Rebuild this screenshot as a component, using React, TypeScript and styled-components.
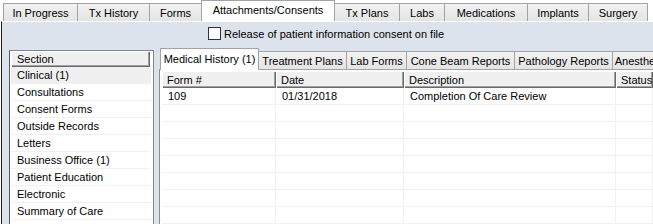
import React from "react";
import styled, { createGlobalStyle } from "styled-components";

const Global = createGlobalStyle`
  html, body { margin: 0; padding: 0; background: #ffffff; }
  body { font-family: "Liberation Sans", Arial, sans-serif; font-size: 11px; color: #000; }
`;

const Root = styled.div`
  width: 653px;
  height: 224px;
  overflow: hidden;
  display: flex;
  flex-direction: column;
  background: #ffffff;
`;

const TopStrip = styled.div`
  display: flex;
  align-items: flex-end;
  height: 21px;
  padding-left: 3px;
  flex: none;
`;

const TopTab = styled.div<{ $w: number; $active?: boolean }>`
  box-sizing: border-box;
  width: ${(p) => p.$w}px;
  height: ${(p) => (p.$active ? 21 : 18)}px;
  margin-left: -1px;
  display: flex;
  align-items: center;
  justify-content: center;
  border: 1px solid #a3a3a3;
  border-bottom: none;
  background: ${(p) => (p.$active ? "#ffffff" : "linear-gradient(#f2f2f2, #e4e4e4)")};
  position: relative;
  z-index: ${(p) => (p.$active ? 2 : 1)};
  padding-bottom: ${(p) => (p.$active ? 3 : 0)}px;
  white-space: nowrap;
  &:first-child { margin-left: 0; }
`;

const Panel = styled.div`
  flex: 1;
  margin-left: 1px;
  border-left: 1px solid #1e1e1e;
  border-top: 1px solid #ffffff;
  background: #dde3ec;
  display: flex;
  flex-direction: column;
  padding-top: 5px;
`;

const ConsentRow = styled.label`
  display: flex;
  align-items: center;
  gap: 3px;
  padding-left: 206px;
  height: 13px;
`;

const CheckBox = styled.span`
  box-sizing: border-box;
  width: 13px;
  height: 13px;
  border: 1px solid #333333;
  background: #ffffff;
  flex: none;
`;

const Body = styled.div`
  display: flex;
  align-items: flex-start;
  margin-top: 8px;
  padding-left: 7px;
`;

const SectionList = styled.div`
  box-sizing: border-box;
  width: 145px;
  margin-top: 2px;
  border: 1px solid #82878f;
  border-left-color: #5a5a5a;
  background: #ffffff;
  padding: 0 2px 0 1px;
  height: 200px;
`;

const ListHeader = styled.div`
  box-sizing: border-box;
  height: 16px;
  width: 139px;
  display: flex;
  align-items: center;
  padding-left: 6px;
  background: #f0f0f0;
  box-shadow: inset 1px 1px 0 #ffffff, inset -1px -1px 0 #696969, inset -2px -2px 0 #a0a0a0;
`;

const ListRow = styled.div<{ $selected?: boolean }>`
  box-sizing: border-box;
  height: 17px;
  display: flex;
  align-items: center;
  padding-left: 6px;
  border-bottom: 1px solid #f0f0f0;
  background: ${(p) => (p.$selected ? "#f0f0f0" : "#ffffff")};
  white-space: nowrap;
`;

const SubTabs = styled.div`
  flex: 1;
  margin-left: 5px;
  display: flex;
  flex-direction: column;
  min-width: 0;
`;

const SubStrip = styled.div`
  display: flex;
  align-items: flex-end;
  height: 22px;
  padding-left: 1px;
  position: relative;
  z-index: 2;
  margin-bottom: -1px;
`;

const SubTab = styled.div<{ $w: number; $active?: boolean }>`
  box-sizing: border-box;
  width: ${(p) => p.$w}px;
  flex: none;
  height: ${(p) => (p.$active ? 22 : 19)}px;
  margin-left: -1px;
  display: flex;
  align-items: center;
  justify-content: center;
  border: 1px solid #a3a3a3;
  border-bottom: ${(p) => (p.$active ? "none" : "1px solid #a3a3a3")};
  background: ${(p) => (p.$active ? "#ffffff" : "linear-gradient(#f2f2f2, #e4e4e4)")};
  padding-bottom: ${(p) => (p.$active ? 2 : 0)}px;
  white-space: nowrap;
  overflow: hidden;
  z-index: ${(p) => (p.$active ? 2 : 1)};
  &:first-child { margin-left: 0; }
`;

const TabPage = styled.div`
  box-sizing: border-box;
  border-top: 1px solid #a3a3a3;
  border-left: 1px solid #8c8c8c;
  box-shadow: inset 1px 0 0 #ffffff;
  background: #ffffff;
  padding: 1px 0 0 2px;
  height: 160px;
`;

const Row = styled.div`
  display: grid;
  grid-template-columns: 114px 128px 212px 1fr;
  height: 17px;
`;

const HeadCell = styled.div`
  box-sizing: border-box;
  display: flex;
  align-items: center;
  padding-left: 5px;
  background: #f0f0f0;
  box-shadow: inset 1px 1px 0 #ffffff, inset -1px -1px 0 #696969, inset -2px -2px 0 #a0a0a0;
  white-space: nowrap;
`;

const Cell = styled.div`
  box-sizing: border-box;
  display: flex;
  align-items: center;
  padding-left: 6px;
  border-right: 1px solid #f0f0f0;
  border-bottom: 1px solid #f0f0f0;
  white-space: nowrap;
`;

const topTabs: [string, number][] = [
  ["In Progress", 75],
  ["Tx History", 73],
  ["Forms", 53],
  ["Attachments/Consents", 134],
  ["Tx Plans", 66],
  ["Labs", 46],
  ["Medications", 84],
  ["Implants", 62],
  ["Surgery", 60],
];

const sections = [
  "Clinical (1)",
  "Consultations",
  "Consent Forms",
  "Outside Records",
  "Letters",
  "Business Office (1)",
  "Patient Education",
  "Electronic",
  "Summary of Care",
  "",
];

const subTabs: [string, number][] = [
  ["Medical History (1)", 99],
  ["Treatment Plans", 89],
  ["Lab Forms", 61],
  ["Cone Beam Reports", 109],
  ["Pathology Reports", 99],
  ["Anesthesia", 60],
];

const rows = [
  ["109", "01/31/2018", "Completion Of Care Review", ""],
  ["", "", "", ""],
  ["", "", "", ""],
  ["", "", "", ""],
  ["", "", "", ""],
  ["", "", "", ""],
  ["", "", "", ""],
  ["", "", "", ""],
];

export default function App() {
  return (
    <Root>
      <Global />
      <TopStrip>
        {topTabs.map(([t, w]) => (
          <TopTab key={t} $w={w} $active={t === "Attachments/Consents"}>
            {t}
          </TopTab>
        ))}
      </TopStrip>
      <Panel>
        <ConsentRow>
          <CheckBox />
          <span>Release of patient information consent on file</span>
        </ConsentRow>
        <Body>
          <SectionList>
            <ListHeader>Section</ListHeader>
            {sections.map((s, i) => (
              <ListRow key={i} $selected={i === 0}>
                {s}
              </ListRow>
            ))}
          </SectionList>
          <SubTabs>
            <SubStrip>
              {subTabs.map(([t, w], i) => (
                <SubTab key={t} $w={w} $active={i === 0}>
                  {t}
                </SubTab>
              ))}
            </SubStrip>
            <TabPage>
              <Row>
                <HeadCell>Form #</HeadCell>
                <HeadCell>Date</HeadCell>
                <HeadCell>Description</HeadCell>
                <HeadCell>Status</HeadCell>
              </Row>
              {rows.map((r, i) => (
                <Row key={i}>
                  {r.map((c, j) => (
                    <Cell key={j}>{c}</Cell>
                  ))}
                </Row>
              ))}
            </TabPage>
          </SubTabs>
        </Body>
      </Panel>
    </Root>
  );
}
